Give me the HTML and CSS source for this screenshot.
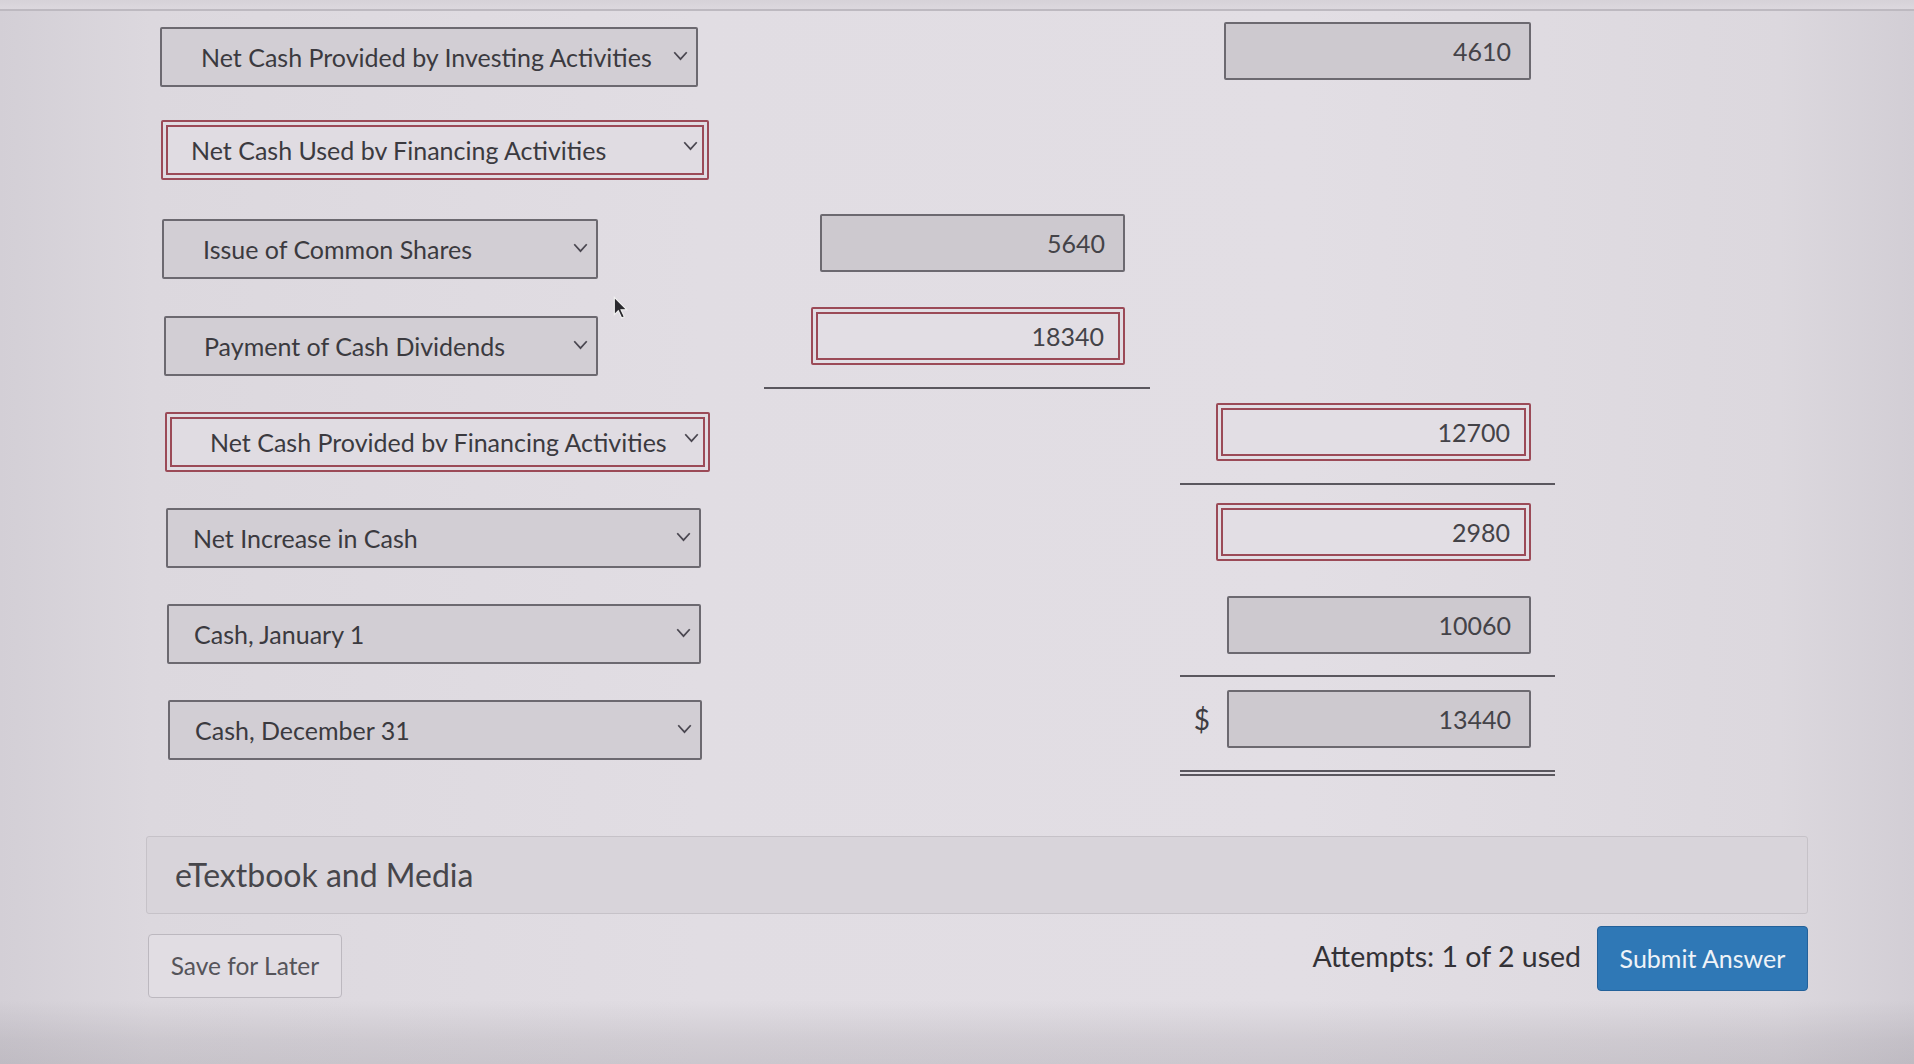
FILE: index.html
```html
<!DOCTYPE html>
<html lang="en">
<head>
<meta charset="utf-8">
<title>Statement of Cash Flows</title>
<link rel="stylesheet" href="styles.css">
</head>
<body>
<div class="topbar"></div>
<main class="content">
  <div class="sheet">
    <!-- row 1 -->
    <div class="cell c1"><div class="select s1">Net Cash Provided by Investing Activities<svg class="chev" viewBox="0 0 12 8"><path d="M1 1 L6 6.5 L11 1"/></svg></div></div>
    <div class="cell c2"></div>
    <div class="cell c3"><div class="num n-gray">4610</div></div>
    <!-- row 2 -->
    <div class="cell c1"><div class="select s2 bad">Net Cash Used bv Financing Activities<svg class="chev" viewBox="0 0 12 8"><path d="M1 1 L6 6.5 L11 1"/></svg></div></div>
    <div class="cell c2"></div>
    <div class="cell c3"></div>
    <!-- row 3 -->
    <div class="cell c1"><div class="select s3">Issue of Common Shares<svg class="chev" viewBox="0 0 12 8"><path d="M1 1 L6 6.5 L11 1"/></svg></div></div>
    <div class="cell c2"><div class="num n-gray n-mid">5640</div></div>
    <div class="cell c3"></div>
    <!-- row 4 -->
    <div class="cell c1"><div class="select s4">Payment of Cash Dividends<svg class="chev" viewBox="0 0 12 8"><path d="M1 1 L6 6.5 L11 1"/></svg></div></div>
    <div class="cell c2 ul"><div class="num n-bad n-mid-bad">18340</div></div>
    <div class="cell c3"></div>
    <!-- row 5 -->
    <div class="cell c1"><div class="select s5 bad">Net Cash Provided bv Financing Activities<svg class="chev" viewBox="0 0 12 8"><path d="M1 1 L6 6.5 L11 1"/></svg></div></div>
    <div class="cell c2"></div>
    <div class="cell c3 ul"><div class="num n-bad">12700</div></div>
    <!-- row 6 -->
    <div class="cell c1"><div class="select s6">Net Increase in Cash<svg class="chev" viewBox="0 0 12 8"><path d="M1 1 L6 6.5 L11 1"/></svg></div></div>
    <div class="cell c2"></div>
    <div class="cell c3"><div class="num n-bad">2980</div></div>
    <!-- row 7 -->
    <div class="cell c1"><div class="select s7">Cash, January 1<svg class="chev" viewBox="0 0 12 8"><path d="M1 1 L6 6.5 L11 1"/></svg></div></div>
    <div class="cell c2"></div>
    <div class="cell c3 ul"><div class="num n-gray n-narrow">10060</div></div>
    <!-- row 8 -->
    <div class="cell c1"><div class="select s8">Cash, December 31<svg class="chev" viewBox="0 0 12 8"><path d="M1 1 L6 6.5 L11 1"/></svg></div></div>
    <div class="cell c2"></div>
    <div class="cell c3 dul"><span class="dollar">$</span><div class="num n-gray n-narrow">13440</div></div>
  </div>

  <section class="media">eTextbook and Media</section>

  <div class="actions">
    <button class="btn-save">Save for Later</button>
    <div class="submit-group">
      <span class="attempts">Attempts: 1 of 2 used</span>
      <button class="btn-submit">Submit Answer</button>
    </div>
  </div>
</main>
<svg class="cursor" viewBox="0 0 12 18"><path d="M1 1 L1 14 L4 11 L6.5 16.5 L8.5 15.6 L6 10.3 L10.2 10.3 Z"/></svg>
</body>
</html>
```
FILE: styles.css
```css
* { box-sizing: border-box; }

html, body {
  margin: 0;
  padding: 0;
}

body {
  width: 1914px;
  height: 1064px;
  overflow: hidden;
  position: relative;
  font-family: Lato, "Open Sans", "Liberation Sans", sans-serif;
  color: #3a393e;
  background:
    linear-gradient(to bottom, rgba(0,0,0,0) 0, rgba(0,0,0,0) 1000px, rgba(90,85,95,0.12) 1040px, rgba(90,85,95,0.16) 1064px),
    linear-gradient(to right, #d3cfd6 0, #dcd8de 150px, #e1dde3 700px, #e2dee4 1300px, #dcd8de 1780px, #d2ced5 1914px);
}

.topbar {
  height: 11px;
  border-bottom: 2px solid #bdb9c0;
  background: linear-gradient(to bottom, #d6d2d8, #dcd8de);
}

.content {
  margin-left: 146px;
  width: 1662px;
}

.sheet {
  display: grid;
  grid-template-columns: 574px 386px 375px;
  column-gap: 30px;
  grid-auto-rows: 96.2px;
  padding-left: 14px;
  margin-top: -2px;
}

.cell {
  display: flex;
  align-items: center;
}

.cell.c2, .cell.c3 {
  justify-content: flex-end;
  padding-right: 24px;
}

.cell.c2 { padding-right: 25px; }

.cell.ul {
  border-bottom: 2px solid #5a575e;
  margin-bottom: 5px;
}

.cell.dul {
  border-bottom: 6px double #5a575e;
  margin-bottom: 3px;
}

/* selects */
.select {
  position: relative;
  flex: none;
  height: 60px;
  display: flex;
  align-items: center;
  font-size: 25px;
  color: #3b3a3f;
  background: #d2ced4;
  border: 2px solid #6c6970;
  border-radius: 2px;
  padding-left: 32px;
  white-space: nowrap;
}

.select.bad {
  border: 7px double #9b4a57;
  background: #e0dce2;
}

.chev {
  position: absolute;
  right: 8px;
  top: 50%;
  width: 15px;
  height: 10px;
  margin-top: -6px;
  fill: none;
  stroke: #4a4750;
  stroke-width: 1.4;
}

.select.bad .chev { right: 4px; margin-top: -9px; }

.s1 { width: 538px; margin-left: 0; padding-left: 39px; }
.s2 { width: 548px; margin-left: 1px; padding-left: 23px; margin-bottom: 6px; }
.s3 { width: 436px; margin-left: 2px; padding-left: 39px; }
.s4 { width: 434px; margin-left: 4px; padding-left: 38px; }
.s5 { width: 545px; margin-left: 5px; padding-left: 38px; }
.s6 { width: 535px; margin-left: 6px; padding-left: 25px; }
.s7 { width: 534px; margin-left: 7px; padding-left: 25px; }
.s8 { width: 534px; margin-left: 8px; padding-left: 25px; }

/* number inputs */
.num {
  flex: none;
  height: 58px;
  display: flex;
  align-items: center;
  justify-content: flex-end;
  font-size: 25px;
  color: #444348;
  padding-right: 18px;
  margin-bottom: 12px;
  border-radius: 2px;
}

.n-gray {
  width: 307px;
  background: #cdc9cf;
  border: 2px solid #6c6970;
}

.n-bad {
  width: 315px;
  background: #e2dee4;
  border: 7px double #9b4a57;
  padding-right: 14px;
}

.n-mid { width: 305px; }
.n-mid-bad { width: 314px; }
.n-narrow { width: 304px; }

.dollar {
  font-size: 28px;
  color: #3e3d42;
  margin-right: 17px;
  margin-bottom: 14px;
}

.cell.dul .num { margin-bottom: 14px; }

/* media panel */
.media {
  margin-top: 57px;
  height: 78px;
  display: flex;
  align-items: center;
  padding-left: 28px;
  font-size: 32px;
  color: #47464b;
  background: #d8d4da;
  border: 1px solid #c6c2c8;
  border-radius: 3px;
}

.actions {
  display: flex;
  justify-content: space-between;
  align-items: flex-start;
  margin-top: 12px;
}

.btn-save {
  margin-top: 8px;
  margin-left: 2px;
  width: 194px;
  height: 64px;
  font-family: inherit;
  font-size: 24.5px;
  color: #55545a;
  background: #e1dde3;
  border: 1px solid #bcb8bf;
  border-radius: 4px;
}

.submit-group {
  display: flex;
  align-items: center;
  gap: 16px;
}

.attempts {
  font-size: 28.5px;
  color: #333237;
  margin-top: -4px;
}

.btn-submit {
  width: 211px;
  height: 65px;
  font-family: inherit;
  font-size: 25px;
  color: #eef3f8;
  background: #2f78b6;
  border: 1px solid #23619a;
  border-radius: 4px;
}

.cursor {
  position: absolute;
  left: 613px;
  top: 296px;
  width: 16px;
  height: 24px;
  fill: #2a292e;
  stroke: #f2f2f2;
  stroke-width: 0.8;
}
```
